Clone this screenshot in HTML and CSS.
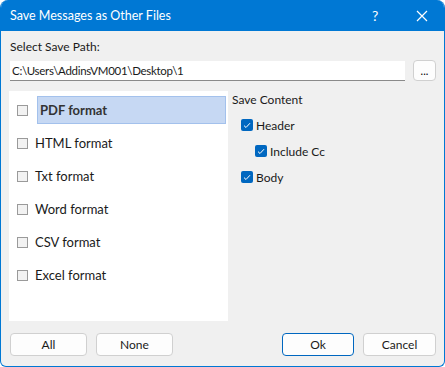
FILE: index.html
```html
<!DOCTYPE html>
<html lang="en">
<head>
  <meta charset="UTF-8" />
  <title>Save Messages as Other Files</title>
  <link rel="stylesheet" href="styles.css">
</head>
<body>
  <div class="window">
    <div class="titlebar">
      <span class="title">Save Messages as Other Files</span>
      <span class="help">?</span>
      <span class="close">
        <svg width="12" height="12" viewBox="0 0 12 12"><path d="M1 1L11 11M11 1L1 11" stroke="#fff" stroke-width="1.2" fill="none"/></svg>
      </span>
    </div>

    <div class="content">
      <div class="path-label">Select Save Path:</div>
      <div class="path-row">
        <div class="path-input">C:\Users\AddinsVM001\Desktop\1</div>
        <button class="browse">...</button>
      </div>

      <div class="main">
        <div class="format-list">
          <div class="format-item selected"><span class="box"></span><span class="label">PDF format</span></div>
          <div class="format-item"><span class="box"></span><span class="label">HTML format</span></div>
          <div class="format-item"><span class="box"></span><span class="label">Txt format</span></div>
          <div class="format-item"><span class="box"></span><span class="label">Word format</span></div>
          <div class="format-item"><span class="box"></span><span class="label">CSV format</span></div>
          <div class="format-item"><span class="box"></span><span class="label">Excel format</span></div>
        </div>

        <div class="save-content">
          <div class="group-title">Save Content</div>
          <div class="check"><span class="cbox"><svg width="8" height="7" viewBox="0 0 8 7"><path d="M1 3.6L3 5.5L7 1.2" stroke="#fff" stroke-width="1" fill="none"/></svg></span>Header</div>
          <div class="check indent"><span class="cbox"><svg width="8" height="7" viewBox="0 0 8 7"><path d="M1 3.6L3 5.5L7 1.2" stroke="#fff" stroke-width="1" fill="none"/></svg></span>Include Cc</div>
          <div class="check"><span class="cbox"><svg width="8" height="7" viewBox="0 0 8 7"><path d="M1 3.6L3 5.5L7 1.2" stroke="#fff" stroke-width="1" fill="none"/></svg></span>Body</div>
        </div>
      </div>

      <div class="buttons">
        <button class="btn">All</button>
        <button class="btn">None</button>
        <span class="spacer"></span>
        <button class="btn primary">Ok</button>
        <button class="btn">Cancel</button>
      </div>
    </div>
  </div>
</body>
</html>
```

FILE: styles.css
```css
body {
  margin: 0;
  font-family: Lato, "Noto Sans", sans-serif;
  font-size: 12px;
  color: #1a1a1a;
  background: #ffffff;
}

.window {
  width: 445px;
  height: 367px;
  box-sizing: border-box;
  background: #f0f0f0;
  border: 1px solid #0078d4;
  border-top: none;
  border-radius: 8px 8px 6px 6px;
  overflow: hidden;
}

.titlebar {
  height: 31px;
  background: #0078d4;
  color: #fff;
  display: flex;
  align-items: center;
  margin: 0 -1px;
}

.title {
  flex: 1;
  padding-left: 10px;
  font-size: 12.5px;
}

.help {
  width: 12px;
  font-size: 14px;
  margin-right: 32px;
}

.close {
  display: flex;
  margin-right: 17px;
}

.content {
  padding: 8px 8px 0 8px;
}

.path-label {
  line-height: 16px;
  margin-left: 1px;
}

.path-row {
  display: flex;
  align-items: center;
  margin-top: 5px;
}

.path-input {
  flex: 1;
  height: 20px;
  line-height: 20px;
  box-sizing: border-box;
  background: #fff;
  border-bottom: 1px solid #8a8a8a;
  margin-left: 1px;
  padding-left: 2px;
  font-size: 11.5px;
  letter-spacing: -0.3px;
}

.browse {
  width: 23px;
  height: 21px;
  margin-left: 8px;
  margin-right: 0;
  padding: 0;
  background: #fdfdfd;
  border: 1px solid #d0d0d0;
  border-radius: 4px;
  font-family: inherit;
  font-size: 11px;
  line-height: 12px;
}

.main {
  display: flex;
  margin-top: 10px;
  height: 230px;
}

.format-list {
  width: 219px;
  background: #fff;
  padding-top: 5px;
}

.format-item {
  display: flex;
  align-items: center;
  height: 28px;
  margin-bottom: 5px;
  padding-left: 8px;
}

.box {
  width: 9px;
  height: 9px;
  border: 1px solid #9a9a9a;
  background: #f2f2f2;
  margin-right: 7px;
}

.format-item.selected .label {
  flex: 1;
  margin-left: 2px;
  height: 26px;
  line-height: 26px;
  background: #c6d8f3;
  border: 1px solid #a3c1ec;
  padding-left: 2px;
  font-weight: bold;
  font-size: 13px;
  color: #333;
  margin-right: 2px;
}

.label {
  font-size: 13px;
}

.save-content {
  padding-left: 4px;
  padding-top: 1px;
}

.group-title {
  line-height: 16px;
}

.check {
  display: flex;
  align-items: center;
  margin-top: 9px;
  margin-left: 9px;
  height: 16px;
}

.check.indent {
  margin-left: 23px;
  margin-top: 10px;
}

.check:last-child {
  margin-top: 10px;
}

.cbox {
  width: 12px;
  height: 12px;
  border-radius: 2px;
  background: #0067c0;
  display: flex;
  align-items: center;
  justify-content: center;
  margin-right: 3px;
}

.buttons {
  display: flex;
  margin-top: 12px;
  padding-left: 1px;
}

.spacer {
  flex: 1;
}

.btn {
  width: 77px;
  height: 23px;
  margin-right: 9px;
  padding: 0;
  background: #fdfdfd;
  border: 1px solid #d0d0d0;
  border-radius: 4px;
  font-family: inherit;
  font-size: 12px;
  color: #1a1a1a;
}

.btn:last-child {
  width: 73px;
  margin-right: 0;
}

.btn.primary {
  width: 72px;
  border-color: #0067c0;
}
```
